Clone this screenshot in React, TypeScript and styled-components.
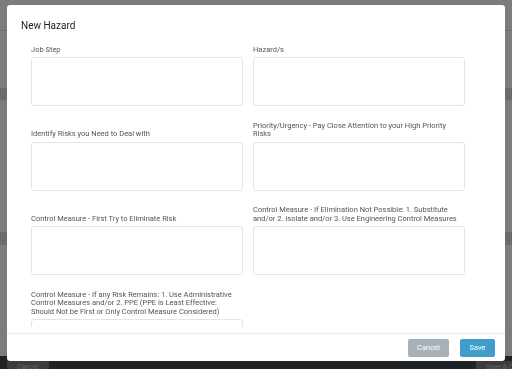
import * as React from "react";
import styled, { createGlobalStyle } from "styled-components";

const Global = createGlobalStyle`
  html, body {
    margin: 0;
    padding: 0;
    background: #f6f6f6;
    font-family: Roboto, "Liberation Sans", Arial, sans-serif;
  }
  * { box-sizing: border-box; }
`;

const Page = styled.div`
  height: 369px;
  display: flex;
  flex-direction: column;
  background: #f8f8f8;
`;

const PageBody = styled.div`
  flex: 1;
  display: flex;
  flex-direction: column;
`;

const PageRule = styled.div<{ $top: number; $h: number }>`
  margin-top: ${(p) => p.$top}px;
  height: ${(p) => p.$h}px;
  background: #d8d8d8;
`;

const PageFooter = styled.div`
  height: 13px;
  background: #41464b;
  display: flex;
  align-items: flex-end;
  justify-content: space-between;
  padding: 0 0 0 7px;
`;

const PageButton = styled.div<{ $w: number }>`
  width: ${(p) => p.$w}px;
  height: 8px;
  background: #74787d;
  color: #c8c8c8;
  font-size: 7px;
  line-height: 12px;
  overflow: hidden;
  white-space: nowrap;
  padding-left: 10px;
`;

const Backdrop = styled.div`
  position: fixed;
  inset: 0;
  background: rgba(0, 0, 0, 0.5);
`;

const Modal = styled.div`
  position: fixed;
  left: 7px;
  top: 5px;
  width: 498px;
  height: 356px;
  background: #fff;
  border-radius: 3px;
  display: flex;
  flex-direction: column;
  overflow: hidden;
`;

const Header = styled.div`
  padding: 14px 14px 0;
`;

const Title = styled.h2`
  margin: 0;
  font-size: 10px;
  line-height: 14px;
  font-weight: 400;
  color: #1d1d1d;
`;

const Body = styled.div`
  flex: 1;
  overflow: hidden;
  margin-bottom: 6px;
  padding: 12.5px 0 0 24px;
`;

const Grid = styled.div`
  display: grid;
  grid-template-columns: 212px 212px;
  column-gap: 10px;
  row-gap: 15.5px;
`;

const Field = styled.label`
  display: flex;
  flex-direction: column;
  justify-content: flex-end;
`;

const Label = styled.span`
  font-size: 7.5px;
  line-height: 8.5px;
  color: #555;
  margin-bottom: 3px;
  padding-right: 4px;
`;

const Input = styled.textarea`
  display: block;
  width: 212px;
  height: 49px;
  border: 1px solid #e4e4e4;
  border-radius: 3px;
  resize: none;
  outline: none;
  background: #fff;
`;

const Footer = styled.div`
  height: 28px;
  border-top: 1px solid #ebebeb;
  display: flex;
  align-items: center;
  justify-content: flex-end;
  gap: 11px;
  padding-right: 10px;
`;

const Button = styled.button<{ $primary?: boolean }>`
  height: 18px;
  width: ${(p) => (p.$primary ? 35 : 41)}px;
  padding: 0;
  border: none;
  border-radius: 2px;
  font-family: inherit;
  font-size: 7.5px;
  color: #fff;
  background: ${(p) => (p.$primary ? "#3f9ccb" : "#a8b1b8")};
`;

const fields = [
  "Job Step",
  "Hazard/s",
  "Identify Risks you Need to Deal with",
  "Priority/Urgency - Pay Close Attention to your High Priority Risks",
  "Control Measure - First Try to Eliminate Risk",
  "Control Measure - If Elimination Not Possible: 1. Substitute and/or 2. Isolate and/or 3. Use Engineering Control Measures",
  "Control Measure - If any Risk Remains: 1. Use Administrative Control Measures and/or 2. PPE (PPE is Least Effective: Should Not be First or Only Control Measure Considered)",
];

export default function App() {
  return (
    <>
      <Global />
      <Page>
        <PageBody>
          <PageRule $top={30} $h={1} />
          <PageRule $top={57} $h={12} />
          <PageRule $top={132} $h={13} />
        </PageBody>
        <PageFooter>
          <PageButton $w={42}>Cancel</PageButton>
          <PageButton $w={36}>Save &amp; Close</PageButton>
        </PageFooter>
      </Page>
      <Backdrop />
      <Modal>
        <Header>
          <Title>New Hazard</Title>
        </Header>
        <Body>
          <Grid>
            {fields.map((f) => (
              <Field key={f}>
                <Label>{f}</Label>
                <Input />
              </Field>
            ))}
          </Grid>
        </Body>
        <Footer>
          <Button>Cancel</Button>
          <Button $primary>Save</Button>
        </Footer>
      </Modal>
    </>
  );
}
